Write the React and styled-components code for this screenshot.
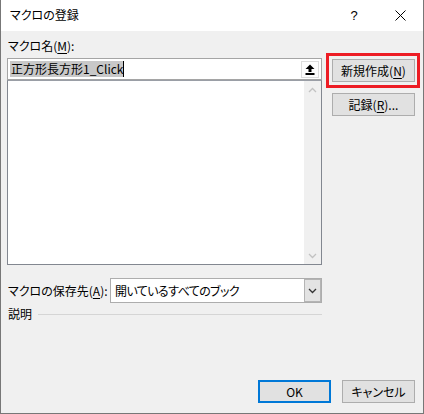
import React from "react";
import styled, { createGlobalStyle } from "styled-components";

const GlobalStyle = createGlobalStyle`
  html, body { margin: 0; padding: 0; background: #f0f0f0; }
  body {
    font-family: "Noto Sans CJK JP", "Noto Sans", sans-serif;
    font-size: 12px;
    color: #000;
    font-feature-settings: "palt";
  }
`;

const Window = styled.div`
  width: 424px;
  height: 414px;
  box-sizing: border-box;
  border: 1px solid #777;
  border-top: none;
  background: #f0f0f0;
  display: flex;
  flex-direction: column;
`;

const TitleBar = styled.div`
  height: 31px;
  flex: none;
  background: #fff;
  display: flex;
  align-items: center;
  padding-left: 9px;
  line-height: 16px;
`;

const Title = styled.div`
  flex: 1;
  padding-bottom: 1px;
`;

const TitleButton = styled.div`
  width: 46px;
  height: 31px;
  display: flex;
  align-items: center;
  justify-content: center;
  font-family: "Liberation Sans", sans-serif;
  font-size: 13px;
`;

const Body = styled.div`
  flex: 1;
  display: flex;
  flex-direction: column;
  padding: 7px 8px 10px 6px;
`;

const Main = styled.div`
  display: flex;
  gap: 10px;
`;

const LeftColumn = styled.div`
  width: 316px;
  display: flex;
  flex-direction: column;
`;

const Label = styled.div`
  line-height: 16px;
  height: 16px;
  padding-left: 1px;
  white-space: nowrap;
`;

const U = styled.span`
  text-decoration: underline;
  text-underline-offset: 2px;
`;

const NameInput = styled.div`
  margin-top: 4px;
  height: 22px;
  box-sizing: border-box;
  border: 1px solid #a5a5a5;
  background: #fff;
  display: flex;
  align-items: center;
  padding: 0 2px 0 2px;
`;

const Selected = styled.span`
  background: #c8c8c8;
  line-height: 16px;
  padding: 0 0 0 1px;
  border-right: 1px solid #000;
`;

const InputSpacer = styled.div`
  flex: 1;
`;

const UpButton = styled.div`
  width: 18px;
  height: 17px;
  box-sizing: border-box;
  border: 1px solid #dcdcdc;
  background: #fdfdfd;
  display: flex;
  align-items: center;
  justify-content: center;
`;

const ListBox = styled.div`
  height: 185px;
  box-sizing: border-box;
  border: 1px solid #828790;
  border-top-color: #9a9ea6;
  background: #fff;
  display: flex;
  justify-content: flex-end;
`;

const ScrollBar = styled.div`
  width: 17px;
  background: #f0f0f0;
  display: flex;
  flex-direction: column;
  justify-content: space-between;
`;

const ScrollArrow = styled.div`
  height: 17px;
  display: flex;
  align-items: center;
  justify-content: center;
`;

const ComboRow = styled.div`
  margin-top: 13px;
  display: flex;
  align-items: center;
  justify-content: space-between;
`;

const Combo = styled.div`
  width: 212px;
  height: 25px;
  box-sizing: border-box;
  border: 1px solid #adadad;
  background: #fff;
  display: flex;
  align-items: stretch;
`;

const ComboText = styled.div`
  flex: 1;
  padding-left: 4px;
  display: flex;
  align-items: center;
  line-height: 16px;
  letter-spacing: -0.6px;
`;

const ComboButton = styled.div`
  width: 17px;
  box-sizing: border-box;
  border: 1px solid #b4b4b4;
  background: #e3e3e3;
  display: flex;
  align-items: center;
  justify-content: center;
`;

const SectionRow = styled.div`
  margin-top: 3px;
  display: flex;
  align-items: center;
  gap: 6px;
`;

const Rule = styled.div`
  flex: 1;
  height: 1px;
  background: #d5d5d5;
`;

const RightColumn = styled.div`
  padding-top: 21px;
  display: flex;
  flex-direction: column;
  gap: 11px;
`;

const Highlight = styled.div`
  position: relative;
  &::after {
    content: "";
    position: absolute;
    top: -6px;
    left: -6px;
    right: -5px;
    bottom: -6px;
    border: 3px solid #ed1c24;
    pointer-events: none;
  }
`;

const Button = styled.div`
  width: ${({ $w }) => $w}px;
  height: 23px;
  box-sizing: border-box;
  border: ${({ $primary }) => ($primary ? "2px solid #0078d7" : "1px solid #adadad")};
  background: #e1e1e1;
  display: flex;
  align-items: center;
  justify-content: center;
  line-height: 16px;
  white-space: nowrap;
`;

const Footer = styled.div`
  margin-top: auto;
  display: flex;
  justify-content: flex-end;
  gap: 11px;
`;

const Chevron = ({ up, color }) => (
  <svg width="9" height="6" viewBox="0 0 9 6">
    <path
      d={up ? "M1 5 L4.5 1.5 L8 5" : "M1 1 L4.5 4.5 L8 1"}
      fill="none"
      stroke={color}
      strokeWidth="1.3"
    />
  </svg>
);

export default function App() {
  return (
    <>
      <GlobalStyle />
      <Window>
        <TitleBar>
          <Title>マクロの登録</Title>
          <TitleButton>?</TitleButton>
          <TitleButton>
            <svg width="11" height="11" viewBox="0 0 11 11">
              <path d="M0.5 0.5 L10.5 10.5 M10.5 0.5 L0.5 10.5" stroke="#000" strokeWidth="1" />
            </svg>
          </TitleButton>
        </TitleBar>
        <Body>
          <Main>
            <LeftColumn>
              <Label>
                マクロ名(<U>M</U>):
              </Label>
              <NameInput>
                <Selected>正方形長方形1_Click</Selected>
                <InputSpacer />
                <UpButton>
                  <svg width="10" height="11" viewBox="0 0 10 11">
                    <path d="M5 0.5 L9.5 5 L6.5 5 L6.5 8 L3.5 8 L3.5 5 L0.5 5 Z" fill="#000" />
                    <rect x="0.5" y="9" width="9" height="2" fill="#000" />
                  </svg>
                </UpButton>
              </NameInput>
              <ListBox>
                <ScrollBar>
                  <ScrollArrow>
                    <Chevron up color="#c2c2c2" />
                  </ScrollArrow>
                  <ScrollArrow>
                    <Chevron color="#c2c2c2" />
                  </ScrollArrow>
                </ScrollBar>
              </ListBox>
              <ComboRow>
                <Label>
                  マクロの保存先(<U>A</U>):
                </Label>
                <Combo>
                  <ComboText>開いているすべてのブック</ComboText>
                  <ComboButton>
                    <Chevron color="#333" />
                  </ComboButton>
                </Combo>
              </ComboRow>
              <SectionRow>
                <Label>説明</Label>
                <Rule />
              </SectionRow>
            </LeftColumn>
            <RightColumn>
              <Highlight>
                <Button $w={83}>
                  新規作成(<U>N</U>)
                </Button>
              </Highlight>
              <Button $w={83}>
                記録(<U>R</U>)...
              </Button>
            </RightColumn>
          </Main>
          <Footer>
            <Button $w={73} $primary>
              OK
            </Button>
            <Button $w={73}>キャンセル</Button>
          </Footer>
        </Body>
      </Window>
    </>
  );
}
